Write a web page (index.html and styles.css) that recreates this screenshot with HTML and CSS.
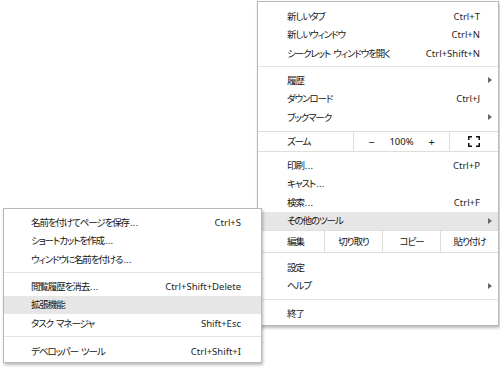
FILE: index.html
```html
<!DOCTYPE html>
<html lang="ja">
<head>
<meta charset="utf-8">
<title>Chrome メニュー</title>
<link rel="stylesheet" href="styles.css">
</head>
<body>
<div class="screen">
  <div class="menu main-menu">
    <div class="item"><span class="label">新しいタブ</span><span class="key">Ctrl+T</span><span class="arrow"></span></div>
    <div class="item"><span class="label">新しいウィンドウ</span><span class="key">Ctrl+N</span><span class="arrow"></span></div>
    <div class="item"><span class="label">シークレット ウィンドウを開く</span><span class="key">Ctrl+Shift+N</span><span class="arrow"></span></div>
    <div class="sep"></div>
    <div class="item"><span class="label">履歴</span><span class="key"></span><span class="arrow"><svg width="4" height="6" viewBox="0 0 4 6"><polygon points="0,0 4,3 0,6" fill="#666"/></svg></span></div>
    <div class="item"><span class="label">ダウンロード</span><span class="key">Ctrl+J</span><span class="arrow"></span></div>
    <div class="item"><span class="label">ブックマーク</span><span class="key"></span><span class="arrow"><svg width="4" height="6" viewBox="0 0 4 6"><polygon points="0,0 4,3 0,6" fill="#666"/></svg></span></div>
    <div class="zoom-row">
      <div class="cell zoom-label">ズーム</div>
      <div class="cell zoom-ctrl"><span class="minus">−</span><span class="pct">100%</span><span class="plus">+</span></div>
      <div class="cell zoom-full"><svg width="12" height="11" viewBox="0 0 12 11"><path d="M0.75 4V0.75H4M8 0.75H11.25V4M11.25 7V10.25H8M4 10.25H0.75V7" fill="none" stroke="#111" stroke-width="1.5"/></svg></div>
    </div>
    <div class="item"><span class="label">印刷<span class="dots">...</span></span><span class="key">Ctrl+P</span><span class="arrow"></span></div>
    <div class="item"><span class="label">キャスト<span class="dots">...</span></span><span class="key"></span><span class="arrow"></span></div>
    <div class="item"><span class="label">検索<span class="dots">...</span></span><span class="key">Ctrl+F</span><span class="arrow"></span></div>
    <div class="item active"><span class="label">その他のツール</span><span class="key"></span><span class="arrow"><svg width="4" height="6" viewBox="0 0 4 6"><polygon points="0,0 4,3 0,6" fill="#666"/></svg></span></div>
    <div class="edit-row">
      <div class="cell edit-label">編集</div>
      <div class="cell edit-btn">切り取り</div>
      <div class="cell edit-btn">コピー</div>
      <div class="cell edit-btn">貼り付け</div>
    </div>
    <div class="item"><span class="label">設定</span><span class="key"></span><span class="arrow"></span></div>
    <div class="item"><span class="label">ヘルプ</span><span class="key"></span><span class="arrow"><svg width="4" height="6" viewBox="0 0 4 6"><polygon points="0,0 4,3 0,6" fill="#666"/></svg></span></div>
    <div class="sep sep-b"></div>
    <div class="item"><span class="label">終了</span><span class="key"></span><span class="arrow"></span></div>
  </div>

  <div class="menu sub-menu">
    <div class="item"><span class="label">名前を付けてページを保存<span class="dots">...</span></span><span class="key">Ctrl+S</span></div>
    <div class="item"><span class="label">ショートカットを作成<span class="dots">...</span></span><span class="key"></span></div>
    <div class="item"><span class="label">ウィンドウに名前を付ける<span class="dots">...</span></span><span class="key"></span></div>
    <div class="sep"></div>
    <div class="item"><span class="label">閲覧履歴を消去<span class="dots">...</span></span><span class="key">Ctrl+Shift+Delete</span></div>
    <div class="item active"><span class="label">拡張機能</span><span class="key"></span></div>
    <div class="item"><span class="label">タスク マネージャ</span><span class="key">Shift+Esc</span></div>
    <div class="sep sep-c"></div>
    <div class="item"><span class="label">デベロッパー ツール</span><span class="key">Ctrl+Shift+I</span></div>
  </div>
</div>
</body>
</html>
```

FILE: styles.css
```css
html, body {
  margin: 0;
  padding: 0;
  background: #ffffff;
}

.screen {
  position: relative;
  width: 500px;
  height: 376px;
  overflow: hidden;
  background: #ffffff;
  font-family: "Noto Sans CJK JP", "Noto Sans", sans-serif;
  font-size: 9.5px;
  color: #141414;
  font-feature-settings: "palt";
}

.menu {
  position: absolute;
  box-sizing: border-box;
  background: #ffffff;
  border: 1px solid #b9b9b9;
  box-shadow: 1px 2px 3px rgba(0, 0, 0, 0.28);
}

.main-menu {
  left: 257px;
  top: 1px;
  width: 242px;
  padding: 5px 0 1.5px;
}

.sub-menu {
  left: 3px;
  top: 208px;
  width: 259px;
  padding: 4px 0 1px;
  z-index: 2;
}

.item {
  display: grid;
  grid-template-columns: 1fr auto 18px;
  align-items: center;
  height: 18.5px;
  padding-left: 29px;
  line-height: 1;
}

.sub-menu .item {
  grid-template-columns: 1fr auto;
  padding-left: 27px;
  padding-right: 20px;
}

.item.active {
  background: #e6e6e6;
}

.label,
.zoom-label,
.edit-label,
.edit-btn {
  white-space: nowrap;
  letter-spacing: -1.1px;
  word-spacing: 2px;
}

.dots {
  font-family: "Noto Sans", sans-serif;
  letter-spacing: 0.3px;
  margin-left: 1px;
}

.key {
  font-family: "Noto Sans", sans-serif;
  font-feature-settings: normal;
  white-space: nowrap;
  color: #1e1e1e;
}

.arrow {
  display: flex;
  justify-content: flex-end;
  align-items: center;
  padding-right: 6px;
}

.sep {
  height: 1px;
  background: #e4e4e4;
  margin: 3.5px 0 4px;
}

.sep-b {
  margin: 4px 0 4.5px;
}

.sub-menu .sep {
  margin: 3px 0 4.5px;
}

.sub-menu .sep-c {
  margin: 3px 0 5.5px;
}

.zoom-row,
.edit-row {
  display: flex;
  box-sizing: border-box;
  border-top: 1px solid #dedede;
  border-bottom: 1px solid #dedede;
  line-height: 1;
}

.zoom-row {
  height: 21px;
  margin: 4.5px 0 4px;
}

.edit-row {
  height: 23px;
  margin: 0 0 5px;
}

.cell {
  display: flex;
  align-items: center;
  white-space: nowrap;
}

.zoom-label {
  width: 95px;
  padding-left: 29px;
  box-sizing: border-box;
}

.zoom-ctrl {
  width: 96px;
  box-sizing: border-box;
  border-left: 1px solid #dedede;
  justify-content: center;
  font-family: "Noto Sans", sans-serif;
  font-feature-settings: normal;
}

.zoom-ctrl .minus {
  width: 30px;
  text-align: center;
  font-size: 11px;
}

.zoom-ctrl .pct {
  width: 30px;
  text-align: center;
}

.zoom-ctrl .plus {
  width: 30px;
  text-align: center;
  font-size: 10px;
}

.zoom-full {
  flex: 1;
  border-left: 1px solid #dedede;
  justify-content: center;
}

.edit-label {
  width: 66px;
  padding-left: 29px;
  box-sizing: border-box;
}

.edit-btn {
  flex: 1;
  justify-content: center;
  border-left: 1px solid #dedede;
}
```
